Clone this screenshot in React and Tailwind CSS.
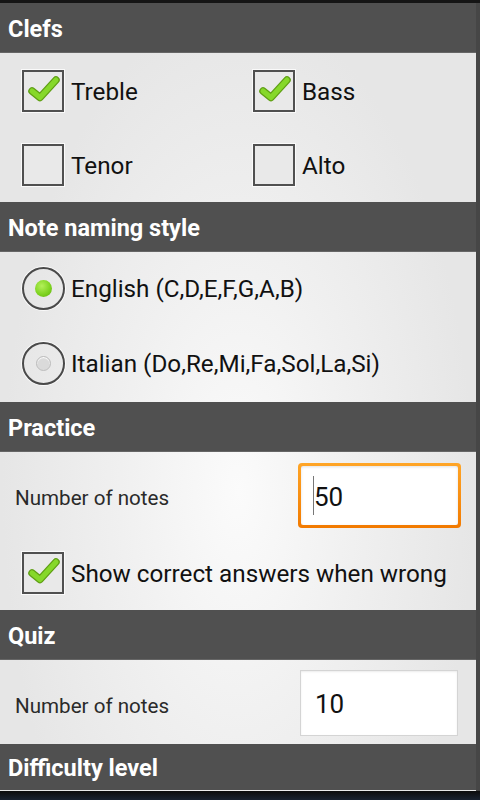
import React from 'react';

const font = { fontFamily: 'Roboto, "Open Sans", sans-serif' };

const Header = ({ title, last = false }) => (
  <div className={`bg-[#505050] ${last ? 'h-[46px]' : 'h-[50px] border-b border-[#666]'} flex items-center pl-[8px] pt-[4px]`}>
    <span className="text-white font-bold text-[23.5px] leading-none">{title}</span>
  </div>
);

const CheckBox = ({ checked }) => (
  <div className="w-[42px] h-[42px] shrink-0 border-2 border-[#505050] bg-[#e9e9e9] shadow-[0_0_0_1px_#fafafa] relative">
    {checked && (
      <svg viewBox="0 0 42 42" className="absolute -left-[2px] -top-[2px] w-[42px] h-[42px]">
        <polyline points="10,21 18,27.5 34,10" fill="none" stroke="#5f9f14" strokeWidth="7.5" strokeLinecap="round" strokeLinejoin="round" />
        <polyline points="10,21 18,27.5 34,10" fill="none" stroke="#86d82a" strokeWidth="5" strokeLinecap="round" strokeLinejoin="round" />
      </svg>
    )}
  </div>
);

const Radio = ({ selected }) => (
  <div className="w-[43px] h-[43px] shrink-0 rounded-full border-2 border-[#4a4a4a] shadow-[0_0_0_1px_#fafafa] flex items-center justify-center">
    {selected ? (
      <div className="w-[17px] h-[17px] rounded-full bg-[radial-gradient(circle_at_40%_35%,#b4f05a,#7bd11e_60%,#5fa814)]" />
    ) : (
      <div className="w-[15px] h-[15px] rounded-full bg-[#dadada] border border-[#bdbdbd] shadow-[inset_0_1px_1px_#fff]" />
    )}
  </div>
);

const Label = ({ children }) => (
  <span className="text-[24.25px] text-[#111] leading-none pt-[2px]">{children}</span>
);

export default function App() {
  return (
    <div className="w-[480px] h-[800px] overflow-hidden bg-[#111]" style={font}>
      <div className="h-[3px] bg-[#151515]" />
      <div className="flex h-[788px]">
        <div className="w-[476px] bg-[radial-gradient(ellipse_at_50%_62%,#fbfbfb_0%,#f0f0f0_35%,#e6e6e6_70%)] flex flex-col">
          <Header title="Clefs" />
          <div className="grid grid-cols-[231px_1fr] pl-[22px] pt-[17px] pb-[16px] gap-y-[32px]">
            <div className="flex items-center gap-[7px]"><CheckBox checked /><Label>Treble</Label></div>
            <div className="flex items-center gap-[7px]"><CheckBox checked /><Label>Bass</Label></div>
            <div className="flex items-center gap-[7px]"><CheckBox /><Label>Tenor</Label></div>
            <div className="flex items-center gap-[7px]"><CheckBox /><Label>Alto</Label></div>
          </div>

          <Header title="Note naming style" />
          <div className="flex flex-col pl-[22px] pt-[15px] pb-[17px] gap-y-[32px]">
            <div className="flex items-center gap-[6px]"><Radio selected /><Label>English (C,D,E,F,G,A,B)</Label></div>
            <div className="flex items-center gap-[6px]"><Radio /><Label>Italian (Do,Re,Mi,Fa,Sol,La,Si)</Label></div>
          </div>

          <Header title="Practice" />
          <div className="flex flex-col pt-[11px] pb-[16px]">
            <div className="flex items-center justify-between pl-[15px] pr-[15px]">
              <span className="text-[20.6px] text-[#2a2a2a] pt-[6px]">Number of notes</span>
              <div className="w-[163px] h-[65px] rounded-[4px] p-[3px] bg-[linear-gradient(#ffa526,#f27a00)]">
                <div className="w-full h-full bg-white rounded-[2px] shadow-[inset_0_1px_3px_rgba(0,0,0,0.12)] flex items-center pl-[12px]">
                  <div className="w-px h-[39px] bg-[#777]" />
                  <span className="text-[26px] text-[#111] leading-none pt-[2px]">50</span>
                </div>
              </div>
            </div>
            <div className="flex items-center gap-[7px] pl-[22px] mt-[24px]"><CheckBox checked /><Label>Show correct answers when wrong</Label></div>
          </div>

          <Header title="Quiz" />
          <div className="flex items-center justify-between pl-[15px] pr-[18px] pt-[10px] pb-[8px]">
            <span className="text-[20.6px] text-[#2a2a2a] pt-[6px]">Number of notes</span>
            <div className="w-[158px] h-[66px] bg-white border border-[#d4d4d4] shadow-[inset_0_1px_2px_rgba(0,0,0,0.08)] flex items-center pl-[14px]">
              <span className="text-[26px] text-[#111] leading-none pt-[2px]">10</span>
            </div>
          </div>

          <Header title="Difficulty level" last />
        </div>
        <div className="w-[4px] bg-[#464646]" />
      </div>
      <div className="h-[9px] bg-[linear-gradient(#0c0c0c,#1a2230)]" />
    </div>
  );
}
